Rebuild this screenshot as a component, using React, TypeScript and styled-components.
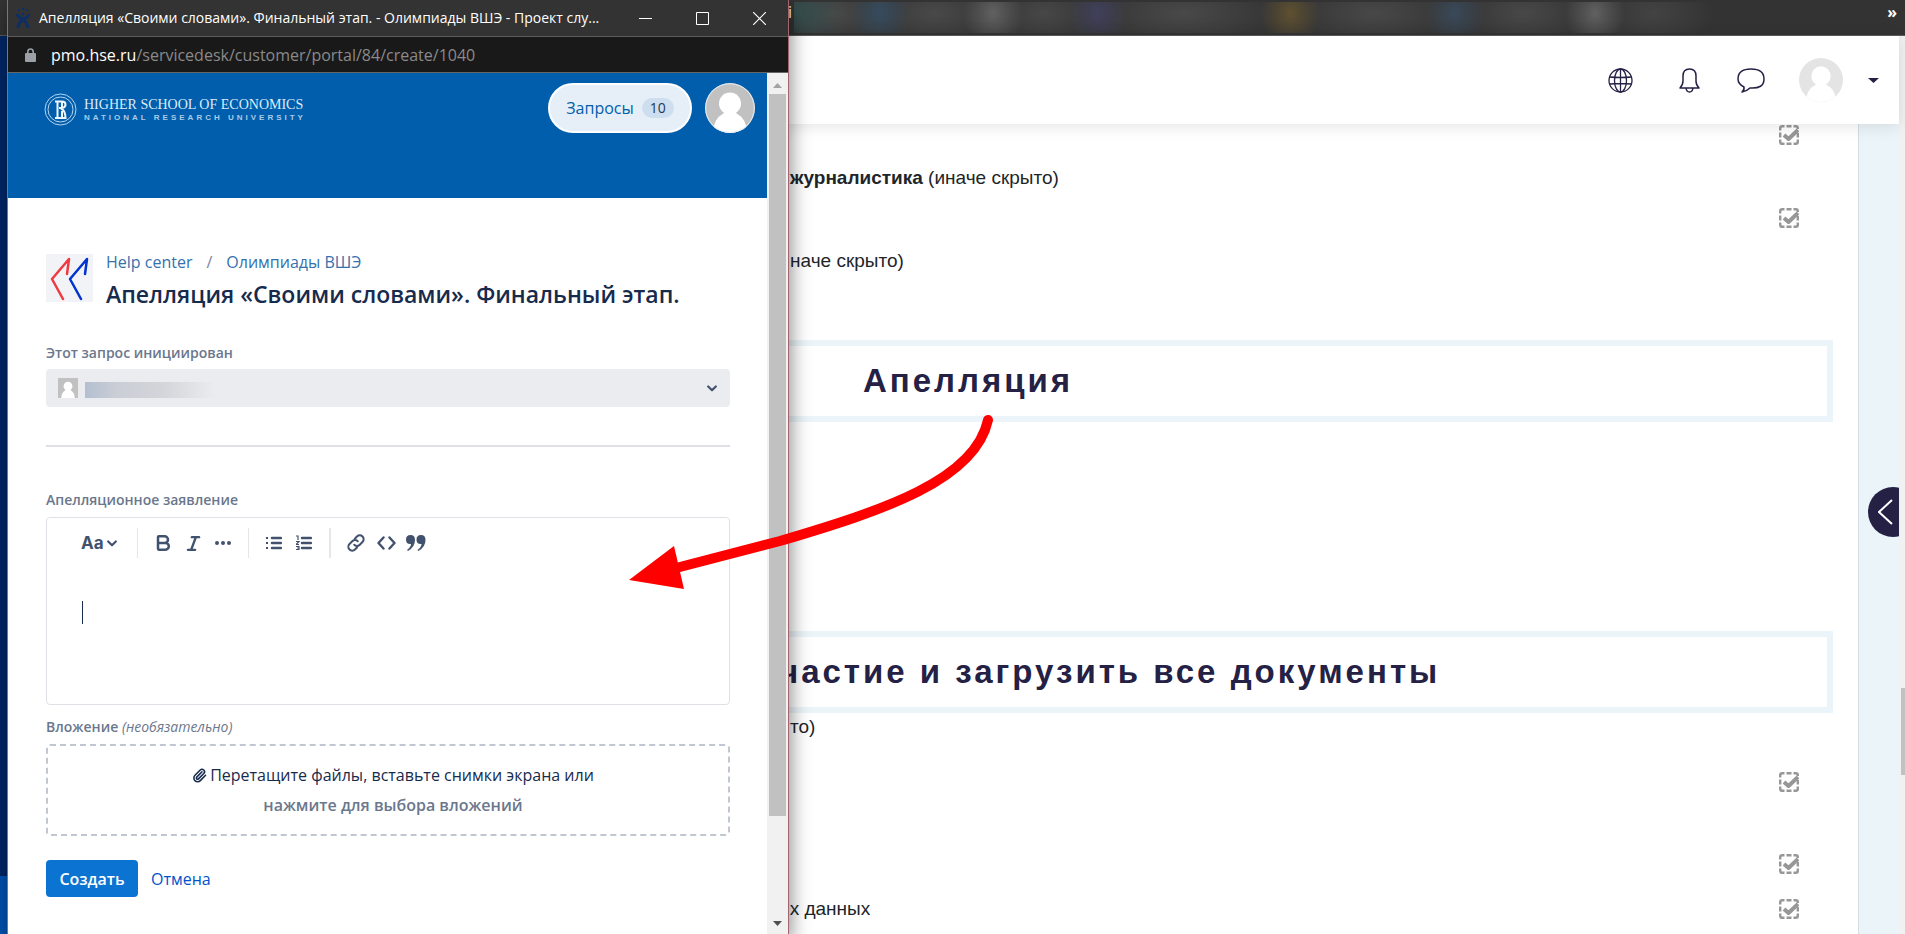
import React from "react";
import styled, { createGlobalStyle } from "styled-components";
import { Paperclip, Bold, Italic } from "lucide-react";

const GlobalStyle = createGlobalStyle`
  *, *::before, *::after { box-sizing: border-box; }
  body { margin: 0; background: #fff; }
  button, select, textarea { font: inherit; color: inherit; border: 0; background: none; padding: 0; margin: 0; }
  button { cursor: pointer; }
  a { text-decoration: none; }
  svg { display: block; flex: none; }
`;

const uiFont = `"Open Sans", "Noto Sans", sans-serif`;
const pageFont = `"Liberation Sans", Arial, sans-serif`;

/* ---------- Browser page behind the pop-up ---------- */

const Screen = styled.div`
  position: relative;
  display: flex;
  flex-direction: column;
  height: 100vh;
  min-height: 920px;
  overflow: hidden;
  font-family: ${pageFont};
`;

const BookmarksBar = styled.div`
  display: flex;
  flex: none;
  height: 36px;
  padding: 2px 8px 2px 788px;
  background: #333;
  border-bottom: 1px solid #5c5c5c;
  color: #fff;
`;

const BookmarkText = styled.span`
  width: 6px;
  font: 16px/20px ${uiFont};
`;

const blot = (x: number, w: number, color: string) =>
  `radial-gradient(ellipse ${w}px 36px at ${x}px 11px, ${color}, transparent)`;

const BlurredBookmarks = styled.div`
  flex: 1;
  height: 31px;
  background: ${[
    blot(4, 44, "#35504f"),
    blot(86, 30, "#354b5e"),
    blot(199, 30, "#616161"),
    blot(304, 30, "#40405c"),
    blot(496, 30, "#5f5030"),
    blot(661, 30, "#3a495a"),
    blot(801, 30, "#616161"),
    blot(40, 60, "#494949"),
    blot(140, 70, "#494949"),
    blot(250, 60, "#474747"),
    blot(390, 100, "#494949"),
    blot(580, 90, "#484848"),
    blot(730, 70, "#484848"),
    blot(860, 60, "#434343"),
  ].join(",")};
`;

const MoreBookmarks = styled.button`
  height: 20px;
  font: bold 16px/20px ${uiFont};
`;

const Viewport = styled.div`
  display: flex;
  flex: 1;
  min-height: 0;
`;

const Page = styled.div`
  display: flex;
  flex: 1;
  flex-direction: column;
  min-width: 0;
`;

const PageHeader = styled.header`
  position: relative;
  display: flex;
  flex: none;
  align-items: center;
  justify-content: flex-end;
  height: 88px;
  padding-right: 20px;
  background: #fff;
  box-shadow: 0 2px 16px rgba(0, 0, 0, 0.11);
`;

const HeaderButton = styled.button<{ $gap: number }>`
  margin-left: ${(p) => p.$gap}px;
`;

const PageBody = styled.div`
  display: flex;
  flex: 1;
  min-height: 0;
`;

const Main = styled.main`
  flex: 1;
  min-width: 0;
  padding-right: 25px;
  background: #fff;
`;

const CourseRow = styled.div<{ $height?: number; $before?: number; $indent?: number }>`
  display: flex;
  align-items: center;
  justify-content: space-between;
  height: ${(p) => p.$height ?? 20}px;
  margin-top: ${(p) => p.$before ?? 0}px;
  padding: 0 34px 0 ${(p) => p.$indent ?? 790}px;
  color: #212529;
  font-size: 19px;
  line-height: 28px;
`;

const SectionTitle = styled.h2<{ $indent: number; $before: number }>`
  height: 82px;
  margin: ${(p) => p.$before}px 0 0 100px;
  padding-left: ${(p) => p.$indent}px;
  border: 6px solid #ebf4f8;
  color: #242145;
  font-size: 33px;
  line-height: 70px;
  letter-spacing: 3px;
  white-space: nowrap;
`;

const SidePanel = styled.aside`
  display: flex;
  width: 41px;
  padding: 363px 0 0 9px;
  background: #ebf4f8;
  border-left: 1px solid #d2dce3;
  overflow: hidden;
`;

const DrawerToggle = styled.button`
  display: flex;
  flex: none;
  align-items: center;
  width: 50px;
  height: 50px;
  padding-left: 10px;
  border-radius: 25px;
  background: #242145;
`;

const PageScroll = styled.div`
  width: 6px;
  padding: 652px 0 0 2px;
  background: #f1f1f1;
`;

const PageThumb = styled.div`
  height: 87px;
  background: #c1c1c1;
`;

/* ---------- Pop-up window ---------- */

const DesktopEdge = styled.div`
  position: absolute;
  top: 36px;
  bottom: 0;
  left: 0;
  width: 7px;
  background: linear-gradient(#002766 840px, #0052b0 840px);
`;

const Window = styled.section`
  position: absolute;
  top: 0;
  bottom: 0;
  left: 7px;
  display: flex;
  flex-direction: column;
  width: 782px;
  border: solid #a0656e;
  border-width: 0 1px;
  background: #fff;
  box-shadow: 2px 8px 18px rgba(0, 0, 0, 0.45);
  font-family: ${uiFont};
`;

const TitleBar = styled.div`
  display: flex;
  flex: none;
  align-items: center;
  height: 37px;
  padding-left: 7px;
  background: #333;
  border-bottom: 1px solid #5c5c5c;
  color: #fff;
`;

const WindowTitle = styled.div`
  flex: 1;
  padding-left: 8px;
  font-size: 14px;
  line-height: 20px;
  white-space: nowrap;
`;

const WindowButton = styled.button`
  display: flex;
  align-items: center;
  justify-content: center;
  width: 57px;
  height: 36px;
`;

const AddressBar = styled.div`
  display: flex;
  flex: none;
  align-items: center;
  gap: 15px;
  height: 36px;
  padding-left: 17px;
  background: #191919;
  border-bottom: 1px solid #666;
  color: #8a8a8a;
  font-size: 16px;
  line-height: 24px;
`;

const Host = styled.span`
  color: #fff;
`;

const Content = styled.div`
  display: flex;
  flex: 1;
  min-height: 0;
`;

const Portal = styled.div`
  flex: 1;
  overflow: hidden;
`;

const Scrollbar = styled.div`
  display: flex;
  flex-direction: column;
  align-items: center;
  width: 21px;
  padding-bottom: 2px;
  background: #f1f1f1;
`;

const ScrollArrow = styled.button`
  display: flex;
  align-items: center;
  justify-content: center;
  width: 17px;
  height: 21px;
  padding-top: 3px;
`;

const Thumb = styled.div`
  width: 17px;
  height: 722px;
  margin-bottom: auto;
  background: #c1c1c1;
`;

const PortalHeader = styled.header`
  display: flex;
  align-items: flex-start;
  height: 125px;
  padding: 10px 12px 0 36px;
  background: #005eac;
`;

const Logo = styled.a`
  display: flex;
  align-items: center;
  gap: 7px;
  height: 52px;
  margin-right: auto;
  color: #dcebf8;
`;

const LogoName = styled.div`
  font: 14px/17px "Liberation Serif", serif;
  white-space: nowrap;
`;

const LogoSub = styled.div`
  font: bold 8px/9px ${pageFont};
  letter-spacing: 3px;
  white-space: nowrap;
  color: #a9cbe8;
`;

const RequestsButton = styled.button`
  display: flex;
  align-items: center;
  justify-content: center;
  gap: 8px;
  width: 144px;
  height: 50px;
  border: 2px solid #fff;
  border-radius: 25px;
  background: #e6eef8;
  color: #005eac;
  font-size: 16px;
`;

const Badge = styled.span`
  width: 32px;
  border-radius: 10px;
  background: #cddfef;
  color: #253858;
  font-size: 14px;
  line-height: 20px;
`;

const ProfileButton = styled.button`
  margin-left: 13px;
`;

const Form = styled.form`
  padding: 56px 37px 0 38px;
`;

const Heading = styled.div`
  display: flex;
  gap: 13px;
  height: 48px;
`;

const Crumbs = styled.nav`
  display: flex;
  gap: 14px;
  margin-top: -4px;
  color: #7a869a;
  font-size: 16px;
  line-height: 24px;
`;

const Crumb = styled.a`
  color: #3571ad;
`;

const Title = styled.h1`
  margin: 4px 0 0;
  color: #172b4d;
  font-size: 23px;
  line-height: 32px;
  font-weight: 600;
  white-space: nowrap;
`;

const Label = styled.label<{ $before: number }>`
  display: block;
  margin-top: ${(p) => p.$before}px;
  color: #6b778c;
  font-size: 14px;
  line-height: 20px;
  font-weight: 600;
`;

const Optional = styled.em`
  font-weight: 400;
`;

const SelectField = styled.div`
  display: flex;
  align-items: center;
  height: 38px;
  margin-top: 6px;
  padding: 0 13px 0 12px;
  border-radius: 4px;
  background: #ebecf0;
`;

const HiddenName = styled.div`
  width: 130px;
  height: 16px;
  margin: 3px 0 0 7px;
  background: linear-gradient(90deg, #b3bfd1, #cbced6 25%, #d3d5da 60%, #ebecf0);
`;

const Select = styled.select`
  flex: 1;
  height: 38px;
  appearance: none;
  outline: none;
`;

const Divider = styled.hr`
  height: 2px;
  margin: 38px 0 0;
  border: 0;
  background: #dfe1e6;
`;

const Editor = styled.div`
  height: 188px;
  margin-top: 7px;
  border: 1px solid #dfe1e6;
  border-radius: 4px;
`;

const Toolbar = styled.div`
  display: flex;
  align-items: center;
  height: 50px;
  padding-left: 34px;
  color: #42526e;
`;

const StyleButton = styled.button`
  display: flex;
  align-items: center;
  gap: 3px;
  width: 46px;
  font: bold 17px/24px Inter, sans-serif;
`;

const ToolButton = styled.button`
  display: flex;
  align-items: center;
  justify-content: center;
  width: 30px;
  height: 30px;
`;

const Separator = styled.div<{ $wide?: boolean }>`
  width: ${(p) => (p.$wide ? 2 : 1)}px;
  height: 30px;
  margin: 0 10px;
  background: #e4e6ea;
`;

const Writing = styled.div`
  display: flex;
  height: 120px;
  padding: 33px 34px 0 35px;
`;

const Caret = styled.div`
  width: 1px;
  height: 23px;
  background: #172b4d;
`;

const TextArea = styled.textarea`
  flex: 1;
  resize: none;
  outline: none;
  font-size: 16px;
`;

const DropZone = styled.div`
  display: flex;
  flex-direction: column;
  align-items: center;
  justify-content: center;
  height: 92px;
  margin-top: 7px;
  padding-left: 10px;
  border: 2px dashed #c1c7d0;
  border-radius: 4px;
  color: #172b4d;
  font-size: 16px;
  line-height: 30px;
`;

const DropHint = styled.div`
  display: flex;
  align-items: center;
  gap: 3px;
`;

const BrowseButton = styled.button`
  color: #6b778c;
  font-weight: 600;
  line-height: 30px;
`;

const Actions = styled.div`
  display: flex;
  align-items: center;
  gap: 13px;
  margin-top: 24px;
  font-size: 16px;
`;

const SubmitButton = styled.button`
  width: 92px;
  height: 37px;
  border-radius: 4px;
  background: #0b73d1;
  color: #fff;
  font-weight: 600;
`;

const CancelLink = styled.a`
  color: #0052cc;
`;

const ArrowLayer = styled.svg`
  position: absolute;
  top: 400px;
  left: 620px;
  pointer-events: none;
`;

/* ---------- Icons ---------- */

const Tick = () => (
  <svg width="20" height="20" viewBox="0 0 20 20" fill="none" stroke="#979797" role="img" aria-label="Выполнено">
    <path
      d="M1.200 5.500V3.200q0-2 2-2h2.300M7.500 1.200h5M14.500 1.200h2.300q2 0 2 2V4M18.800 8v4.500M18.800 14.500v2.300q0 2-2 2h-2.300M12.500 18.800h-5M5.500 18.800H3.200q-2 0-2-2v-2.300M1.200 12.500v-5"
      strokeWidth="2.400"
    />
    <path d="m5 10 4.500 4L19 5" strokeWidth="4" strokeLinejoin="round" />
  </svg>
);

const Globe = () => (
  <svg width="25" height="25" viewBox="0 0 25 25" fill="none" stroke="#242145" strokeWidth="1.300">
    <circle cx="12.500" cy="12.500" r="11.500" />
    <ellipse cx="12.500" cy="12.500" rx="6" ry="11.500" />
    <path d="M12.500 1v23M1.500 9q11 1 22 0M1.500 16q11-1 22 0" />
  </svg>
);

const Bell = () => (
  <svg width="21" height="25" viewBox="0 0 21 25" fill="none" stroke="#242145" strokeWidth="1.500">
    <path d="M1 20q3-3 3-7V8q0-7 6.500-7T17 8v5q0 4 3 7zM7 20q.5 4 3.500 4t3.500-4" strokeLinejoin="round" />
  </svg>
);

const Comment = () => (
  <svg width="28" height="25" viewBox="0 0 28 25" fill="none" stroke="#242145" strokeWidth="1.500" strokeLinejoin="round">
    <path d="M7 19Q1 16 1 11 1 1 14 1t13 10q0 10-14 9-3 3-8 4 2.500-2 2-5z" />
  </svg>
);

const Person = ({ size, bg, round, ring }: { size: number; bg: string; round?: boolean; ring?: boolean }) => {
  const id = `person-${size}`;
  return (
    <svg width={size} height={size} viewBox="0 0 50 50">
      <clipPath id={id}>{round ? <circle cx="25" cy="25" r="25" /> : <rect width="50" height="50" />}</clipPath>
      <g clipPath={`url(#${id})`}>
        <rect width="50" height="50" fill={bg} />
        <circle cx="25" cy="20.500" r="11" fill="#fff" />
        <path d="M8 50q0-14 11-20h12q11 6 11 20z" fill="#fff" />
      </g>
      {ring && <circle cx="25" cy="25" r="24.300" fill="none" stroke="#e6eef8" strokeWidth="1" />}
    </svg>
  );
};

const Chevron = () => (
  <svg width="10" height="7" viewBox="0 0 10 7" fill="none" stroke="#42526e" strokeWidth="2.200" strokeLinecap="round" strokeLinejoin="round">
    <path d="m1.200 1.500 3.800 3.700 3.800-3.700" />
  </svg>
);

const JiraMark = () => (
  <svg width="16" height="21" viewBox="0 0 16 21" fill="none" stroke="#0b2f66" strokeWidth="3">
    <path d="M2 6q1 4 6 5 5-1 6-5M3 20q0-4 5-9 5 5 5 9" />
    <circle cx="8" cy="6" r="1.500" fill="#0b2f66" stroke="none" />
    <path d="M3 2h2M7 1h2M11 2h2" strokeWidth="2" />
  </svg>
);

const Lock = () => (
  <svg width="11" height="14" viewBox="0 0 11 14">
    <path d="M2.800 6V3.700a2.700 2.700 0 0 1 5.400 0V6" fill="none" stroke="#9aa0a6" strokeWidth="1.600" />
    <rect y="5" width="11" height="9" rx="1" fill="#9aa0a6" />
  </svg>
);

const Emblem = () => (
  <svg width="33" height="33" viewBox="0 0 33 33" fill="none" stroke="#b9d6ee">
    <circle cx="16.500" cy="16.500" r="15.500" />
    <circle cx="16.500" cy="16.500" r="12.500" />
    <path d="M13.500 8v17M11 8.500h7q3.500 0 3.500 3T18 15h-3M18 9v6M17 15.500q4.500 2 4.500 9.500M11 25h11.500M18 25v-7" stroke="#eef5fb" strokeWidth="2" />
  </svg>
);

const ProjectIcon = () => (
  <svg width="47" height="48" viewBox="0 0 47 48" fill="none" strokeWidth="2.500" strokeLinecap="round" strokeLinejoin="round">
    <rect width="47" height="48" fill="#f1f3f6" />
    <path d="M17 45 6 25 23 5l-2 15" stroke="#ef3a42" />
    <path d="M35 45 24 25 41 5l-2 15" stroke="#0033d0" />
  </svg>
);

const Dots = () => (
  <svg width="16" height="4" viewBox="0 0 16 4" fill="currentColor">
    <circle cx="2" cy="2" r="2" />
    <circle cx="8" cy="2" r="2" />
    <circle cx="14" cy="2" r="2" />
  </svg>
);

const BulletIcon = () => (
  <svg width="16" height="14" viewBox="0 0 16 14" stroke="currentColor" strokeWidth="2">
    <path d="M0 2h2M0 7h2M0 12h2" />
    <path d="M6 2h9M6 7h9M6 12h9" strokeWidth="2.500" strokeLinecap="round" />
  </svg>
);

const NumberIcon = () => (
  <svg width="16" height="16" viewBox="0 0 16 16" fill="none" stroke="currentColor" strokeWidth="1.200">
    <path d="M0 1h2v4M0 6.500h3l-3 3h3M0 11.500h3v3H0M1 13h2" />
    <path d="M6 3h9M6 8h9M6 13h9" strokeWidth="2.500" strokeLinecap="round" />
  </svg>
);

const LinkIcon = () => (
  <svg width="18" height="18" viewBox="0 0 18 18" fill="none" stroke="currentColor" strokeWidth="2" strokeLinecap="round">
    <path d="m8 4.500 2-2a3.700 3.700 0 0 1 5.500 5.500l-3 3a3.500 3.500 0 0 1-5.300-.3" />
    <path d="m10 13.500-2 2A3.700 3.700 0 0 1 2.500 10l3-3a3.500 3.500 0 0 1 5.300.3" />
  </svg>
);

const CodeIcon = () => (
  <svg width="19" height="14" viewBox="0 0 19 14" fill="none" stroke="currentColor" strokeWidth="2.400" strokeLinecap="round" strokeLinejoin="round">
    <path d="M6.500 1.500 1.500 7l5 5.500M12.500 1.500l5 5.500-5 5.500" />
  </svg>
);

const QuoteIcon = () => (
  <svg width="20" height="16" viewBox="0 0 20 16" fill="currentColor">
    <path d="M4.500 0Q9 0 9 5q0 7-7 11l-1-1q4-3 4-6Q0 9.500 0 4.500 0 0 4.500 0zM15 0q4.500 0 4.500 5 0 7-7 11l-1-1q4-3 4-6-5 .5-5-4.500Q10.500 0 15 0z" />
  </svg>
);

export default function App() {
  return (
    <Screen>
      <GlobalStyle />
      <BookmarksBar>
        <BookmarkText>i</BookmarkText>
        <BlurredBookmarks />
        <MoreBookmarks aria-label="Другие закладки">»</MoreBookmarks>
      </BookmarksBar>

      <Viewport>
        <Page>
          <PageHeader>
            <HeaderButton $gap={0} aria-label="Язык"><Globe /></HeaderButton>
            <HeaderButton $gap={46} aria-label="Уведомления"><Bell /></HeaderButton>
            <HeaderButton $gap={37} aria-label="Сообщения"><Comment /></HeaderButton>
            <HeaderButton $gap={34} aria-label="Профиль"><Person size={44} bg="#e4e4e4" round /></HeaderButton>
            <HeaderButton $gap={25} aria-label="Меню профиля">
              <svg width="11" height="5" viewBox="0 0 11 5"><path d="M0 0h11L5.500 5z" fill="#242145" /></svg>
            </HeaderButton>
          </PageHeader>
          <PageBody>
            <Main>
              <CourseRow $height={22}><span /><Tick /></CourseRow>
              <CourseRow $height={64}><span><b>журналистика</b> (иначе скрыто)</span></CourseRow>
              <CourseRow $height={16}><span /><Tick /></CourseRow>
              <CourseRow $height={70}>наче скрыто)</CourseRow>
              <SectionTitle $before={44} $indent={757}>Апелляция</SectionTitle>
              <SectionTitle $before={209} $indent={673}>частие и загрузить все документы</SectionTitle>
              <CourseRow $height={28}>то)</CourseRow>
              <CourseRow $before={31}><span /><Tick /></CourseRow>
              <CourseRow $before={62}><span /><Tick /></CourseRow>
              <CourseRow $before={25} $indent={776}>ых данных<Tick /></CourseRow>
            </Main>
            <SidePanel>
              <DrawerToggle aria-label="Открыть панель">
                <svg width="15" height="26" viewBox="0 0 15 26" fill="none" stroke="#fff" strokeWidth="2">
                  <path d="M14 1 1 13l13 12" />
                </svg>
              </DrawerToggle>
            </SidePanel>
          </PageBody>
        </Page>
        <PageScroll><PageThumb /></PageScroll>
      </Viewport>

      <DesktopEdge />

      <Window>
        <TitleBar>
          <JiraMark />
          <WindowTitle>Апелляция «Своими словами». Финальный этап. - Олимпиады ВШЭ - Проект слу...</WindowTitle>
          <WindowButton aria-label="Свернуть">
            <svg width="13" height="13" viewBox="0 0 13 13" stroke="#fff"><path d="M0 6.500h13" /></svg>
          </WindowButton>
          <WindowButton aria-label="Развернуть">
            <svg width="13" height="13" viewBox="0 0 13 13" stroke="#fff" fill="none"><path d="M.5.5h12v12H.5z" /></svg>
          </WindowButton>
          <WindowButton aria-label="Закрыть">
            <svg width="13" height="13" viewBox="0 0 13 13" stroke="#fff" strokeWidth="1.200"><path d="m0 0 13 13M13 0 0 13" /></svg>
          </WindowButton>
        </TitleBar>
        <AddressBar>
          <Lock />
          <span><Host>pmo.hse.ru</Host>/servicedesk/customer/portal/84/create/1040</span>
        </AddressBar>
        <Content>
          <Portal>
            <PortalHeader>
              <Logo href="#">
                <Emblem />
                <div>
                  <LogoName>HIGHER SCHOOL OF ECONOMICS</LogoName>
                  <LogoSub>NATIONAL RESEARCH UNIVERSITY</LogoSub>
                </div>
              </Logo>
              <RequestsButton>Запросы <Badge>10</Badge></RequestsButton>
              <ProfileButton aria-label="Профиль"><Person size={50} bg="#c1c1c1" round ring /></ProfileButton>
            </PortalHeader>
            <Form onSubmit={(e) => e.preventDefault()}>
              <Heading>
                <ProjectIcon />
                <div>
                  <Crumbs>
                    <Crumb href="#">Help center</Crumb>
                    <span>/</span>
                    <Crumb href="#">Олимпиады ВШЭ</Crumb>
                  </Crumbs>
                  <Title>Апелляция «Своими словами». Финальный этап.</Title>
                </div>
              </Heading>

              <Label htmlFor="requester" $before={41}>Этот запрос инициирован</Label>
              <SelectField>
                <Person size={20} bg="#c1c1c1" />
                <HiddenName />
                <Select id="requester"><option value="me"></option></Select>
                <Chevron />
              </SelectField>
              <Divider />

              <Label htmlFor="statement" $before={43}>Апелляционное заявление</Label>
              <Editor>
                <Toolbar>
                  <StyleButton type="button">Aa<Chevron /></StyleButton>
                  <Separator />
                  <ToolButton type="button" aria-label="Полужирный"><Bold size={20} strokeWidth={3} /></ToolButton>
                  <ToolButton type="button" aria-label="Курсив"><Italic size={19} strokeWidth={3} /></ToolButton>
                  <ToolButton type="button" aria-label="Ещё"><Dots /></ToolButton>
                  <Separator />
                  <ToolButton type="button" aria-label="Маркированный список"><BulletIcon /></ToolButton>
                  <ToolButton type="button" aria-label="Нумерованный список"><NumberIcon /></ToolButton>
                  <Separator $wide />
                  <ToolButton type="button" aria-label="Ссылка"><LinkIcon /></ToolButton>
                  <ToolButton type="button" aria-label="Код"><CodeIcon /></ToolButton>
                  <ToolButton type="button" aria-label="Цитата"><QuoteIcon /></ToolButton>
                </Toolbar>
                <Writing>
                  <Caret />
                  <TextArea id="statement" />
                </Writing>
              </Editor>

              <Label htmlFor="browse" $before={12}>Вложение <Optional>(необязательно)</Optional></Label>
              <DropZone>
                <DropHint>
                  <Paperclip size={15} strokeWidth={2.5} />
                  Перетащите файлы, вставьте снимки экрана или
                </DropHint>
                <BrowseButton id="browse" type="button">нажмите для выбора вложений</BrowseButton>
              </DropZone>

              <Actions>
                <SubmitButton type="submit">Создать</SubmitButton>
                <CancelLink href="#">Отмена</CancelLink>
              </Actions>
            </Form>
          </Portal>
          <Scrollbar>
            <ScrollArrow aria-label="Вверх">
              <svg width="9" height="5" viewBox="0 0 9 5"><path d="M0 5h9L4.500 0z" fill="#a3a3a3" /></svg>
            </ScrollArrow>
            <Thumb />
            <ScrollArrow aria-label="Вниз">
              <svg width="9" height="5" viewBox="0 0 9 5"><path d="M0 0h9L4.500 5z" fill="#505050" /></svg>
            </ScrollArrow>
          </Scrollbar>
        </Content>
      </Window>

      <ArrowLayer width="390" height="200" viewBox="620 400 390 200" aria-hidden="true">
        <path d="M988 420C975 480 885 510 780 541L676 568" fill="none" stroke="#f00" strokeWidth="10" strokeLinecap="round" />
        <path d="m629 580 45-34 10 43z" fill="#f00" />
      </ArrowLayer>
    </Screen>
  );
}
